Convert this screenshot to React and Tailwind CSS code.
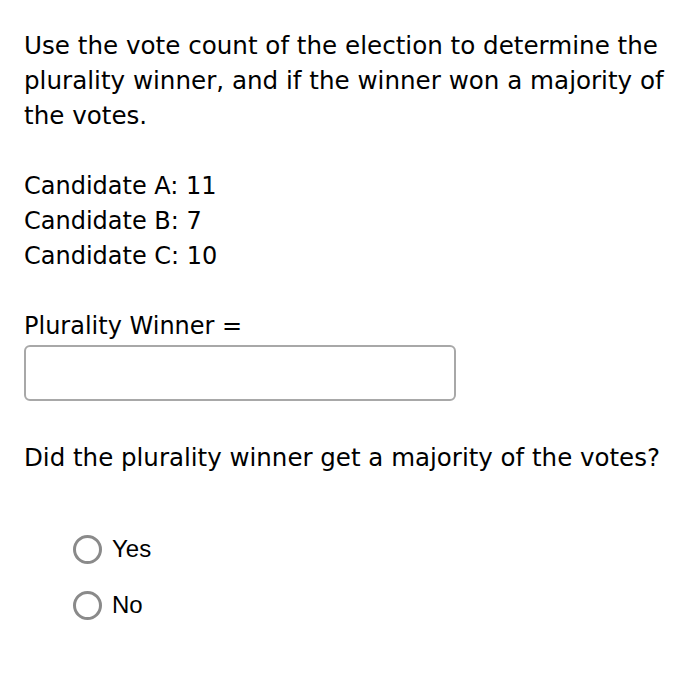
import React from "react";

function Radio({ label }) {
  return (
    <label className="flex items-center gap-[10px] h-[30px]">
      <span className="w-[29px] h-[29px] rounded-full border-[3px] border-[#8a8a8a] bg-white" />
      <span className="text-[24px] text-black" style={{ fontFamily: '"Liberation Sans", Arial, sans-serif' }}>
        {label}
      </span>
    </label>
  );
}

export default function App() {
  return (
    <div className="w-[700px] h-[675px] bg-white text-black px-[24px] pt-[28px]" style={{ fontFamily: '"DejaVu Sans", Verdana, sans-serif' }}>
      <p className="text-[24.6px] leading-[35px]">
        Use the vote count of the election to determine the plurality winner, and if the winner won a majority of the votes.
      </p>
      <div className="mt-[36px] text-[24px] leading-[35px]">
        <div>Candidate A: 11</div>
        <div>Candidate B: 7</div>
        <div>Candidate C: 10</div>
      </div>
      <div className="mt-[35px] text-[24px] leading-[35px]">Plurality Winner =</div>
      <div className="mt-[1px] w-[432px] h-[56px] rounded-[6px] border-2 border-[#a8a8a8]" />
      <div className="mt-[39px] text-[24.5px] leading-[35px]">Did the plurality winner get a majority of the votes?</div>
      <div className="mt-[59px] pl-[49px] flex flex-col gap-[26px]">
        <Radio label="Yes" />
        <Radio label="No" />
      </div>
    </div>
  );
}
